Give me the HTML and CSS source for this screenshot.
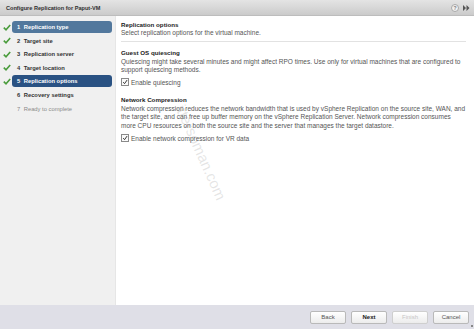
FILE: index.html
```html
<!DOCTYPE html>
<html>
<head>
<meta charset="utf-8">
<link rel="stylesheet" href="styles.css">
</head>
<body>
<div class="window">
  <div class="titlebar">
    <span class="title">Configure Replication for Paput-VM</span>
    <span class="tools">
      <span class="help">?</span>
      <svg class="fwd" width="7" height="6" viewBox="0 0 7 6"><path d="M0 0 L3 3 L0 6 Z M3.5 0 L6.5 3 L3.5 6 Z" fill="#555"/></svg>
    </span>
  </div>
  <div class="main">
    <div class="sidebar">
      <div class="step done current-light"><svg class="check" viewBox="0 0 8 7"><path d="M0.8 3.6 L3 5.8 L7.2 1" fill="none" stroke="#4a9c3c" stroke-width="1.6"/></svg><span class="label"><span class="num">1</span>Replication type</span></div>
      <div class="step done"><svg class="check" viewBox="0 0 8 7"><path d="M0.8 3.6 L3 5.8 L7.2 1" fill="none" stroke="#4a9c3c" stroke-width="1.6"/></svg><span class="label"><span class="num">2</span>Target site</span></div>
      <div class="step done"><svg class="check" viewBox="0 0 8 7"><path d="M0.8 3.6 L3 5.8 L7.2 1" fill="none" stroke="#4a9c3c" stroke-width="1.6"/></svg><span class="label"><span class="num">3</span>Replication server</span></div>
      <div class="step done"><svg class="check" viewBox="0 0 8 7"><path d="M0.8 3.6 L3 5.8 L7.2 1" fill="none" stroke="#4a9c3c" stroke-width="1.6"/></svg><span class="label"><span class="num">4</span>Target location</span></div>
      <div class="step done current"><svg class="check" viewBox="0 0 8 7"><path d="M0.8 3.6 L3 5.8 L7.2 1" fill="none" stroke="#4a9c3c" stroke-width="1.6"/></svg><span class="label"><span class="num">5</span>Replication options</span></div>
      <div class="step"><span class="nocheck"></span><span class="label"><span class="num">6</span>Recovery settings</span></div>
      <div class="step pending"><span class="nocheck"></span><span class="label"><span class="num">7</span>Ready to complete</span></div>
    </div>
    <div class="content">
      <div class="head">
        <div class="h">Replication options</div>
        <div class="p">Select replication options for the virtual machine.</div>
      </div>
      <div class="section">
        <div class="h">Guest OS quiescing</div>
        <div class="p">Quiescing might take several minutes and might affect RPO times. Use only for virtual machines that are configured to support quiescing methods.</div>
        <label class="cb"><span class="box"><svg viewBox="0 0 8 8"><path d="M1.6 4.2 L3.4 6.2 L6.8 1.4" fill="none" stroke="#222" stroke-width="1.2"/></svg></span>Enable quiescing</label>
      </div>
      <div class="section">
        <div class="h">Network Compression</div>
        <div class="p">Network compression reduces the network bandwidth that is used by vSphere Replication on the source site, WAN, and the target site, and can free up buffer memory on the vSphere Replication Server. Network compression consumes more CPU resources on both the source site and the server that manages the target datastore.</div>
        <label class="cb"><span class="box"><svg viewBox="0 0 8 8"><path d="M1.6 4.2 L3.4 6.2 L6.8 1.4" fill="none" stroke="#222" stroke-width="1.2"/></svg></span>Enable network compression for VR data</label>
      </div>
      <div class="watermark">ittersoman.com</div>
    </div>
  </div>
  <div class="footer">
    <button class="btn">Back</button>
    <button class="btn primary">Next</button>
    <button class="btn disabled">Finish</button>
    <button class="btn">Cancel</button>
    <span class="grip"></span>
  </div>
</div>
</body>
</html>
```

FILE: styles.css
```css
* { box-sizing: border-box; }
html, body { margin: 0; padding: 0; background: #fff; }
body { font-family: "Liberation Sans", Arial, sans-serif; color: #333; }

.window {
  width: 474px;
  height: 329px;
  display: flex;
  flex-direction: column;
  overflow: hidden;
}

.titlebar {
  height: 16px;
  flex: none;
  background: linear-gradient(#e4e4e4, #cbcbcb);
  border-bottom: 1px solid #bdbdbd;
  display: flex;
  align-items: center;
  justify-content: space-between;
  padding: 0 4px 0 6px;
}
.title { font-weight: bold; font-size: 5.6px; color: #303030; }
.tools { display: flex; align-items: center; gap: 4px; }
.help {
  width: 8px; height: 8px; border-radius: 50%;
  border: 1px solid #a8a8a8;
  background: #f2f2f2;
  font-size: 5px; font-weight: bold; color: #777;
  display: flex; align-items: center; justify-content: center;
}
.fwd { display: block; }

.main { flex: 1; display: flex; min-height: 0; }

.sidebar {
  width: 116px;
  flex: none;
  background: #f0f0f0;
  border-right: 1px solid #e6e6e6;
  padding-top: 5px;
  display: flex;
  flex-direction: column;
  gap: 1.6px;
}
.step {
  height: 12px;
  display: flex;
  align-items: center;
}
.check { width: 8px; height: 7px; margin: 0 1px 0 3px; flex: none; }
.nocheck { width: 12px; flex: none; }
.label {
  width: 100px;
  height: 12px;
  line-height: 12px;
  padding-left: 5px;
  font-size: 5.8px;
  font-weight: bold;
  color: #333;
  border-radius: 3px;
  white-space: nowrap;
}
.num { margin-right: 3.5px; }
.current-light .label { background: #52789d; color: #fff; }
.current .label { background: #2a5283; color: #fff; }
.pending .label { color: #8a8a8a; font-weight: normal; }

.content {
  flex: 1;
  position: relative;
  padding: 4px 8px 0 5px;
  font-size: 6.5px;
}
.h { font-weight: bold; font-size: 6.2px; color: #222; line-height: 9px; }
.p { color: #555; line-height: 8.6px; }
.head { border-bottom: 1px solid #e2e2e2; padding-bottom: 3px; margin-bottom: 6px; }
.section { margin-bottom: 8px; }
.section .h { margin-bottom: 1px; }
.cb {
  display: flex; align-items: center;
  margin-top: 3px;
  color: #555;
  line-height: 9px;
}
.box {
  width: 8px; height: 8px;
  border: 1px solid #8a8a8a;
  background: #fafafa;
  margin-right: 2px;
  display: flex;
}
.box svg { width: 100%; height: 100%; }

.watermark {
  position: absolute;
  left: 72px;
  top: 86px;
  font-size: 15px;
  color: rgba(150,150,150,0.25);
  transform: rotate(66deg);
  transform-origin: left top;
  white-space: nowrap;
}

.footer {
  height: 24px;
  flex: none;
  background: #dfdfe7;
  display: flex;
  align-items: center;
  justify-content: flex-end;
  padding: 0 5px 0 0;
  gap: 5px;
  position: relative;
}
.btn {
  width: 36px;
  height: 13px;
  padding: 0;
  border: 1px solid #b9b9b9;
  border-radius: 2px;
  background: linear-gradient(#ffffff, #ececec);
  font-family: "Liberation Sans", Arial, sans-serif;
  font-size: 6px;
  color: #555;
}
.btn.primary { font-weight: bold; color: #222; }
.btn.disabled { color: #c6c6c6; border-color: #cfcfcf; }
.grip {
  position: absolute;
  right: 1px;
  bottom: 2px;
  width: 2px;
  height: 2px;
  background: #888;
}
```
